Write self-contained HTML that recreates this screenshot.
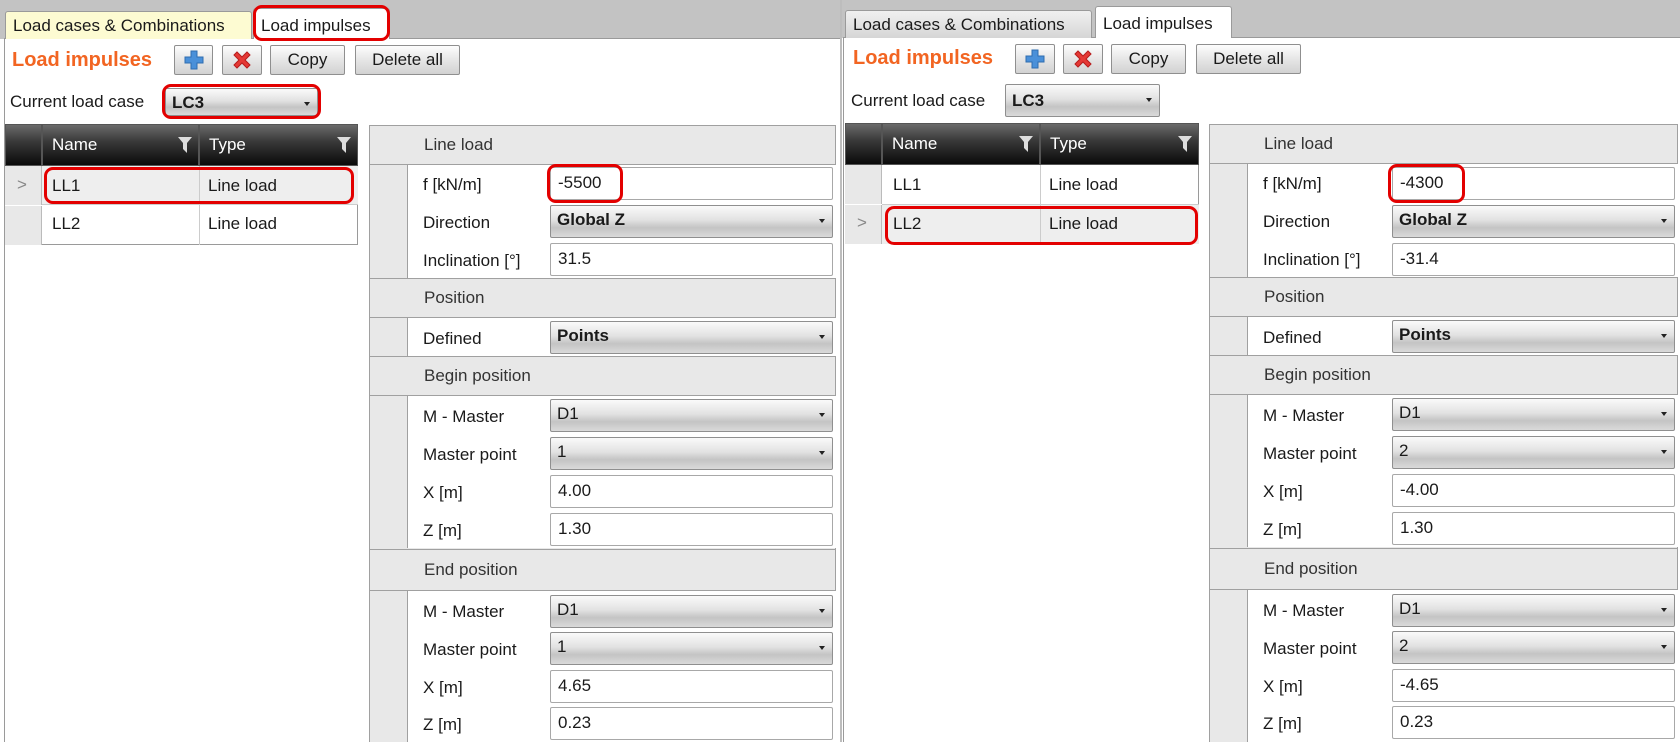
<!DOCTYPE html>
<html><head><meta charset="utf-8"><style>
*{margin:0;padding:0;box-sizing:border-box}
body{width:1680px;height:742px;overflow:hidden;background:#fff;font-family:"Liberation Sans",Arial,sans-serif;font-size:17px;color:#1a1a1a;position:relative}
.a{position:absolute}
.band{top:0;height:39px;background:#c3c3c3}
.tab{height:28px;border:1px solid #9a9a9a;border-bottom:none;border-radius:3px 3px 0 0;padding:4px 0 0 7px;font-size:17px;white-space:nowrap}
.title{color:#f26522;font-weight:bold;font-size:20px}
.btn{height:30px;border:1px solid #8f8f8f;border-radius:2px;background:linear-gradient(#fdfdfd,#e6e6e6 50%,#d2d2d2);text-align:center;font-size:17px;line-height:28px}
.combo{border:1px solid #8f8f8f;border-radius:2px;background:linear-gradient(#fafafa,#e2e2e2 45%,#c4c4c4 70%,#dadada);padding:4px 0 0 6px;font-size:17px}
.combo:after{content:"";position:absolute;right:7px;top:13px;border-left:3px solid transparent;border-right:3px solid transparent;border-top:4px solid #222}
.inp{border:1px solid #a8a8a8;border-radius:2px;background:#fff;padding:5px 0 0 7px}
.red{border:3px solid #e30000;border-radius:9px}
.gh{background:linear-gradient(#6a6a6a,#3a3a3a 40%,#0a0a0a);color:#fff;border:1px solid #555}
.gh svg{position:absolute;right:6px;top:12px}
.ph{background:#e8e8e8;border:1px solid #a0a0a0;height:40px;padding:9px 0 0 54px;color:#333}
.lbl{font-size:17px}
</style></head><body>

<!-- LEFT PANEL -->
<div class="a band" style="left:0;width:840px"></div>
<div class="a" style="left:840px;top:0;width:2px;height:742px;background:#bdbdbd"></div>
<div class="a" style="left:4px;top:38px;width:836px;height:704px;border-left:1px solid #9a9a9a;border-top:1px solid #9a9a9a;background:#fff"></div>
<div class="a tab" style="left:5px;top:11px;width:247px;background:#fdfbd2">Load cases &amp; Combinations</div>
<div class="a tab" style="left:253px;top:8px;width:137px;height:31px;background:#fff;padding-top:7px">Load impulses</div>
<div class="a red" style="left:253px;top:5px;width:137px;height:36px"></div>
<div class="a title" style="left:12px;top:49px">Load impulses</div>
<div class="a btn" style="left:174px;top:45px;width:39px"><svg width="22" height="22" viewBox="0 0 22 22" style="margin-top:3px"><path d="M8 2h6v6h6v6h-6v6H8v-6H2V8h6z" fill="#4a90d9" stroke="#2f6db0"/></svg></div>
<div class="a btn" style="left:222px;top:45px;width:40px"><svg width="22" height="22" viewBox="0 0 22 22" style="margin-top:3px"><path d="M3 6l3-3 5 5 5-5 3 3-5 5 5 5-3 3-5-5-5 5-3-3 5-5z" fill="#e53935" stroke="#b71c1c"/></svg></div>
<div class="a btn" style="left:270px;top:45px;width:75px">Copy</div>
<div class="a btn" style="left:355px;top:45px;width:105px">Delete all</div>
<div class="a lbl" style="left:10px;top:92px">Current load case</div>
<div class="a combo" style="left:165px;top:88px;width:153px;height:28px;font-weight:bold">LC3</div>
<div class="a red" style="left:162px;top:84px;width:159px;height:35px"></div>
<!-- grid -->
<div class="a" style="left:5px;top:124px;width:353px;height:121px;border:1px solid #9a9a9a;background:#fff"></div>
<div class="a gh" style="left:5px;top:124px;width:37px;height:42px"></div>
<div class="a gh" style="left:42px;top:124px;width:157px;height:42px;padding:10px 0 0 9px">Name<svg width="14" height="16" viewBox="0 0 14 16"><path d="M0 0h14l-5 6v10l-4-4V6z" fill="#ddd"/></svg></div>
<div class="a gh" style="left:199px;top:124px;width:159px;height:42px;padding:10px 0 0 9px">Type<svg width="14" height="16" viewBox="0 0 14 16"><path d="M0 0h14l-5 6v10l-4-4V6z" fill="#ddd"/></svg></div>
<div class="a" style="left:5px;top:166px;width:37px;height:79px;background:#e8e8e8;border-right:1px solid #bbb"></div>
<div class="a" style="left:42px;top:166px;width:316px;height:39px;background:#eeeeee;border-bottom:1px solid #ccc"></div>
<div class="a" style="left:199px;top:166px;width:1px;height:79px;background:#ccc"></div>
<div class="a" style="left:5px;top:205px;width:37px;height:1px;background:#fff"></div>
<div class="a" style="left:17px;top:175px;color:#888">&gt;</div>
<div class="a" style="left:52px;top:176px">LL1</div><div class="a" style="left:208px;top:176px">Line load</div>
<div class="a" style="left:52px;top:214px">LL2</div><div class="a" style="left:208px;top:214px">Line load</div>
<div class="a red" style="left:44px;top:167px;width:310px;height:37px"></div>
<!-- properties -->
<div class="a" style="left:369px;top:125px;width:467px;height:617px;background:#e8e8e8;border-left:1px solid #a0a0a0;border-right:1px solid #a0a0a0"></div>
<div class="a" style="left:407px;top:164px;width:429px;height:114px;background:#fff;border-left:1px solid #a0a0a0"></div>
<div class="a" style="left:407px;top:318px;width:429px;height:38px;background:#fff;border-left:1px solid #a0a0a0"></div>
<div class="a" style="left:407px;top:396px;width:429px;height:152px;background:#fff;border-left:1px solid #a0a0a0"></div>
<div class="a" style="left:407px;top:590px;width:429px;height:152px;background:#fff;border-left:1px solid #a0a0a0"></div>
<div class="a ph" style="left:369px;top:125px;width:467px">Line load</div>
<div class="a ph" style="left:369px;top:278px;width:467px">Position</div>
<div class="a ph" style="left:369px;top:356px;width:467px">Begin position</div>
<div class="a ph" style="left:369px;top:549px;width:467px;height:42px;padding-top:10px">End position</div>
<div class="a" style="left:423px;top:175px">f [kN/m]</div><div class="a inp" style="left:550px;top:167px;width:283px;height:33px">-5500</div>
<div class="a" style="left:423px;top:213px">Direction</div><div class="a combo" style="left:550px;top:205px;width:283px;height:33px;font-weight:bold">Global Z</div>
<div class="a" style="left:423px;top:251px">Inclination [°]</div><div class="a inp" style="left:550px;top:243px;width:283px;height:33px">31.5</div>
<div class="a" style="left:423px;top:329px">Defined</div><div class="a combo" style="left:550px;top:321px;width:283px;height:33px;font-weight:bold">Points</div>
<div class="a" style="left:423px;top:407px">M - Master</div><div class="a combo" style="left:550px;top:399px;width:283px;height:33px">D1</div>
<div class="a" style="left:423px;top:445px">Master point</div><div class="a combo" style="left:550px;top:437px;width:283px;height:33px">1</div>
<div class="a" style="left:423px;top:483px">X [m]</div><div class="a inp" style="left:550px;top:475px;width:283px;height:33px">4.00</div>
<div class="a" style="left:423px;top:521px">Z [m]</div><div class="a inp" style="left:550px;top:513px;width:283px;height:33px">1.30</div>
<div class="a" style="left:423px;top:602px">M - Master</div><div class="a combo" style="left:550px;top:595px;width:283px;height:33px">D1</div>
<div class="a" style="left:423px;top:640px">Master point</div><div class="a combo" style="left:550px;top:632px;width:283px;height:33px">1</div>
<div class="a" style="left:423px;top:678px">X [m]</div><div class="a inp" style="left:550px;top:670px;width:283px;height:33px">4.65</div>
<div class="a" style="left:423px;top:715px">Z [m]</div><div class="a inp" style="left:550px;top:707px;width:283px;height:33px">0.23</div>
<div class="a red" style="left:547px;top:164px;width:76px;height:39px"></div>

<!-- RIGHT PANEL -->
<div class="a band" style="left:842px;width:838px;height:38px"></div>
<div class="a" style="left:843px;top:37px;width:837px;height:705px;border-left:1px solid #9a9a9a;border-top:1px solid #9a9a9a;background:#fff"></div>
<div class="a tab" style="left:845px;top:10px;width:247px;background:linear-gradient(#f0f0f0,#d6d6d6)">Load cases &amp; Combinations</div>
<div class="a tab" style="left:1095px;top:6px;width:137px;height:32px;background:#fff;padding-top:7px">Load impulses</div>
<div class="a title" style="left:853px;top:47px">Load impulses</div>
<div class="a btn" style="left:1015px;top:44px;width:40px"><svg width="22" height="22" viewBox="0 0 22 22" style="margin-top:3px"><path d="M8 2h6v6h6v6h-6v6H8v-6H2V8h6z" fill="#4a90d9" stroke="#2f6db0"/></svg></div>
<div class="a btn" style="left:1063px;top:44px;width:40px"><svg width="22" height="22" viewBox="0 0 22 22" style="margin-top:3px"><path d="M3 6l3-3 5 5 5-5 3 3-5 5 5 5-3 3-5-5-5 5-3-3 5-5z" fill="#e53935" stroke="#b71c1c"/></svg></div>
<div class="a btn" style="left:1111px;top:44px;width:75px">Copy</div>
<div class="a btn" style="left:1196px;top:44px;width:105px">Delete all</div>
<div class="a lbl" style="left:851px;top:91px">Current load case</div>
<div class="a combo" style="left:1005px;top:84px;width:155px;height:33px;font-weight:bold;padding-top:6px">LC3</div>
<div class="a" style="left:845px;top:123px;width:354px;height:121px;border:1px solid #9a9a9a;background:#fff"></div>
<div class="a gh" style="left:845px;top:123px;width:37px;height:42px"></div>
<div class="a gh" style="left:882px;top:123px;width:158px;height:42px;padding:10px 0 0 9px">Name<svg width="14" height="16" viewBox="0 0 14 16"><path d="M0 0h14l-5 6v10l-4-4V6z" fill="#ddd"/></svg></div>
<div class="a gh" style="left:1040px;top:123px;width:159px;height:42px;padding:10px 0 0 9px">Type<svg width="14" height="16" viewBox="0 0 14 16"><path d="M0 0h14l-5 6v10l-4-4V6z" fill="#ddd"/></svg></div>
<div class="a" style="left:845px;top:165px;width:37px;height:79px;background:#e8e8e8;border-right:1px solid #bbb"></div>
<div class="a" style="left:882px;top:204px;width:317px;height:40px;background:#eeeeee;border-top:1px solid #ccc"></div>
<div class="a" style="left:1040px;top:165px;width:1px;height:79px;background:#ccc"></div>
<div class="a" style="left:845px;top:204px;width:37px;height:1px;background:#fff"></div>
<div class="a" style="left:857px;top:213px;color:#888">&gt;</div>
<div class="a" style="left:893px;top:175px">LL1</div><div class="a" style="left:1049px;top:175px">Line load</div>
<div class="a" style="left:893px;top:214px">LL2</div><div class="a" style="left:1049px;top:214px">Line load</div>
<div class="a red" style="left:885px;top:206px;width:313px;height:39px"></div>
<div class="a" style="left:1209px;top:124px;width:469px;height:618px;background:#e8e8e8;border-left:1px solid #a0a0a0;border-right:1px solid #a0a0a0"></div>
<div class="a" style="left:1247px;top:163px;width:431px;height:114px;background:#fff;border-left:1px solid #a0a0a0"></div>
<div class="a" style="left:1247px;top:317px;width:431px;height:38px;background:#fff;border-left:1px solid #a0a0a0"></div>
<div class="a" style="left:1247px;top:395px;width:431px;height:152px;background:#fff;border-left:1px solid #a0a0a0"></div>
<div class="a" style="left:1247px;top:589px;width:431px;height:153px;background:#fff;border-left:1px solid #a0a0a0"></div>
<div class="a ph" style="left:1209px;top:124px;width:469px">Line load</div>
<div class="a ph" style="left:1209px;top:277px;width:469px">Position</div>
<div class="a ph" style="left:1209px;top:355px;width:469px">Begin position</div>
<div class="a ph" style="left:1209px;top:548px;width:469px;height:42px;padding-top:10px">End position</div>
<div class="a" style="left:1263px;top:174px">f [kN/m]</div><div class="a inp" style="left:1392px;top:167px;width:283px;height:33px">-4300</div>
<div class="a" style="left:1263px;top:212px">Direction</div><div class="a combo" style="left:1392px;top:205px;width:283px;height:33px;font-weight:bold">Global Z</div>
<div class="a" style="left:1263px;top:250px">Inclination [°]</div><div class="a inp" style="left:1392px;top:243px;width:283px;height:33px">-31.4</div>
<div class="a" style="left:1263px;top:328px">Defined</div><div class="a combo" style="left:1392px;top:320px;width:283px;height:33px;font-weight:bold">Points</div>
<div class="a" style="left:1263px;top:406px">M - Master</div><div class="a combo" style="left:1392px;top:398px;width:283px;height:33px">D1</div>
<div class="a" style="left:1263px;top:444px">Master point</div><div class="a combo" style="left:1392px;top:436px;width:283px;height:33px">2</div>
<div class="a" style="left:1263px;top:482px">X [m]</div><div class="a inp" style="left:1392px;top:474px;width:283px;height:33px">-4.00</div>
<div class="a" style="left:1263px;top:520px">Z [m]</div><div class="a inp" style="left:1392px;top:512px;width:283px;height:33px">1.30</div>
<div class="a" style="left:1263px;top:601px">M - Master</div><div class="a combo" style="left:1392px;top:594px;width:283px;height:33px">D1</div>
<div class="a" style="left:1263px;top:639px">Master point</div><div class="a combo" style="left:1392px;top:631px;width:283px;height:33px">2</div>
<div class="a" style="left:1263px;top:677px">X [m]</div><div class="a inp" style="left:1392px;top:669px;width:283px;height:33px">-4.65</div>
<div class="a" style="left:1263px;top:714px">Z [m]</div><div class="a inp" style="left:1392px;top:706px;width:283px;height:33px">0.23</div>
<div class="a red" style="left:1388px;top:164px;width:77px;height:39px"></div>
</body></html>
